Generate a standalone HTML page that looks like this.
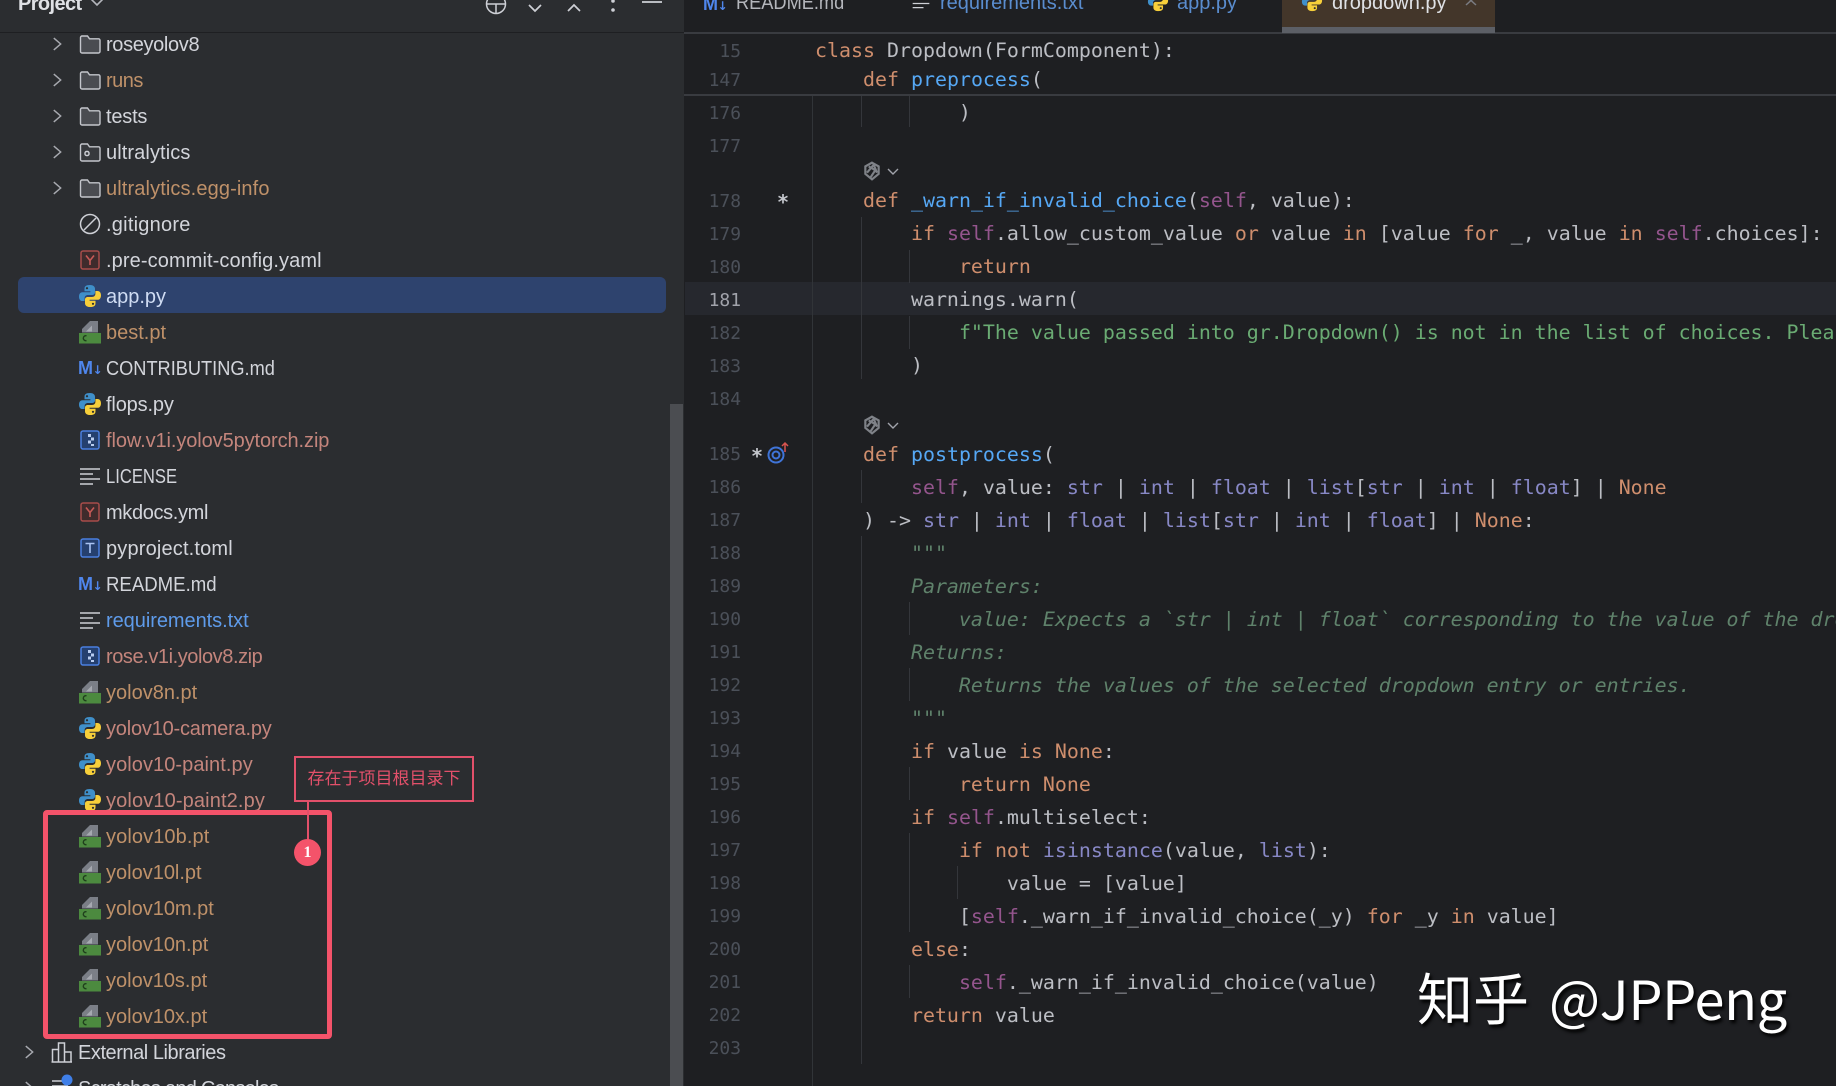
<!DOCTYPE html>
<html><head><meta charset="utf-8"><style>
html,body{margin:0;padding:0;background:#1e1f22}
#p{position:relative;width:1836px;height:1086px;overflow:hidden;background:#1e1f22}
#s{position:absolute;left:0;top:0;width:684px;height:1086px;background:#2b2d30}
.r{position:absolute;left:106px;height:36px;margin-top:2px;font:20px/36px "Liberation Sans",sans-serif;color:#d3d5db;white-space:pre;transform-origin:0 0}
.o{color:#bf9169}.q{color:#c4857c}.b{color:#5e9bea}
svg.i{position:absolute;width:24px;height:24px;overflow:visible}
.m{position:absolute;font:bold 18px/20px "Liberation Sans",sans-serif;color:#4f86ec;letter-spacing:-.5px;white-space:pre}
.m span{font:bold 12px/20px "DejaVu Sans",sans-serif}
.c{position:absolute;left:815px;right:0;height:33px;font:19.93px/33px "DejaVu Sans Mono",monospace;color:#bcbec4;white-space:pre;overflow:hidden}
.n{position:absolute;left:690px;width:51px;margin-top:1px;text-align:right;height:33px;font:17.94px/33px "DejaVu Sans Mono",monospace;color:#4b5059}
.k{color:#cf8e6d}.f{color:#56a8f5}.e{color:#94558d}.u{color:#8888c6}.g{color:#6aab73}.d{color:#5f826b;font-style:italic}
.l{position:absolute;width:1px;background:#34363b}
.t{position:absolute;top:-15px;font:20px/36px "Liberation Sans",sans-serif;white-space:pre;transform-origin:0 0}
</style></head><body><div id="p">
<svg width="0" height="0" style="position:absolute"><defs>
<symbol id="fo" viewBox="0 0 24 24"><path d="M2.500 5.500a1.500 1.500 0 0 1 1.500-1.500h5.500l2 2.800h9a1.500 1.500 0 0 1 1.500 1.500v11.200a1.500 1.500 0 0 1-1.500 1.500H4a1.500 1.500 0 0 1-1.500-1.500z" fill="#4a4c51" stroke="#c4c6cc" stroke-width="1.400"/></symbol>
<symbol id="fu" viewBox="0 0 24 24"><path d="M2.500 5.500a1.500 1.500 0 0 1 1.500-1.500h5.500l2 2.800h9a1.500 1.500 0 0 1 1.500 1.500v11.200a1.500 1.500 0 0 1-1.500 1.500H4a1.500 1.500 0 0 1-1.500-1.500z" fill="#37393d" stroke="#c4c6cc" stroke-width="1.400"/><rect x="7" y="11.500" width="4" height="4" rx="1.500" fill="none" stroke="#ced0d6" stroke-width="1.400"/></symbol>
<symbol id="py" viewBox="0 0 24 24"><path d="M12 1C7.500 1 6.500 2.600 6.500 4.800V7.200H12.400V8.200H4.400C2.200 8.200 1 10 1 12.600S2.200 17 4.400 17H6.600V14.200C6.600 12.200 8 11 10 11H14.400C16 11 17 9.800 17 8.300V4.800C17 2.600 15.200 1 12 1Z" fill="#3f8fc9"/><circle cx="9" cy="4.200" r="1.100" fill="#2b2d30"/><path d="M12 23C16.500 23 17.500 21.400 17.500 19.200V16.800H11.600V15.800H19.600C21.800 15.800 23 14 23 11.400S21.800 7 19.600 7H17.400V9.800C17.400 11.800 16 13 14 13H9.600C8 13 7 14.200 7 15.700V19.200C7 21.400 8.800 23 12 23Z" fill="#f7cf3a"/><circle cx="15" cy="19.800" r="1.100" fill="#2b2d30"/></symbol>
<symbol id="pt" viewBox="0 0 24 24"><path d="M4 12.500V9L12 1H20V12.500Z" fill="#7b7f87"/><path d="M8 11.500 14 5.500V11.500Z" fill="#a6a9b0"/><rect x="1" y="13" width="22" height="10.500" fill="#4c8a3f"/><path d="M8.500 15.800a2.500 2.500 0 1 0 0 4.800" fill="none" stroke="#1f3f1c" stroke-width="1.400"/></symbol>
<symbol id="gi" viewBox="0 0 24 24"><circle cx="12" cy="12" r="9.500" fill="none" stroke="#ced0d6" stroke-width="1.500"/><path d="M6 18 18 6" stroke="#ced0d6" stroke-width="1.500"/></symbol>
<symbol id="y" viewBox="0 0 24 24"><rect x="3" y="3" width="18" height="18" rx="2" fill="#3f2b2c" stroke="#a84c4a" stroke-width="1.500"/><path d="M8 7.500 12 12.500 16 7.500M12 12.500V17" fill="none" stroke="#c75a57" stroke-width="1.600"/></symbol>
<symbol id="z" viewBox="0 0 24 24"><rect x="3" y="3" width="18" height="18" rx="2" fill="#25406f" stroke="#4a7fe0" stroke-width="1.500"/><path d="M10 6h3v3h-3zM13 9.500h3v3h-3zM10 12.500h3v3h-3zM13 16h3v2h-3z" fill="#b9cdf0"/></symbol>
<symbol id="tm" viewBox="0 0 24 24"><rect x="3" y="3" width="18" height="18" rx="2" fill="#25406f" stroke="#4a7fe0" stroke-width="1.500"/><path d="M7.500 7.500h9M12 7.500V17" fill="none" stroke="#a9c3f3" stroke-width="1.600"/></symbol>
<symbol id="tx" viewBox="0 0 24 24"><path d="M2 5h20M2 10h13M2 15h20M2 20h13" stroke="#ced0d6" stroke-width="1.500"/></symbol>
<symbol id="ch" viewBox="0 0 24 24"><path d="M8.500 5.500 16 12 8.500 18.500" fill="none" stroke="#a8aab0" stroke-width="1.600"/></symbol>
<symbol id="ai" viewBox="0 0 24 24"><path d="M12 2 20 6.500V15.500L12 22 4 15.500V6.500Z M8 6.500 16 11 10 20 M6 14 14 4.500 18 14" fill="none" stroke="#7f8288" stroke-width="2.600"/></symbol>
</defs></svg>

<div id="s"></div>
<div style="position:absolute;left:0;top:32px;width:684px;height:1px;background:#1e1f22"></div>
<div class="r" style="left:18px;top:-16px;font-weight:bold;color:#dfe1e5;letter-spacing:-.6px">Project</div>
<svg style="position:absolute;left:89px;top:-4px;overflow:visible" width="16" height="12"><path d="M2 3 8 9 14 3" fill="none" stroke="#b4b6bc" stroke-width="1.600"/></svg>
<svg style="position:absolute;left:480px;top:-8px" width="190" height="32"><circle cx="16" cy="12" r="9.500" fill="none" stroke="#ced0d6" stroke-width="1.500"/><path d="M6 12H26M16 12V22" stroke="#ced0d6" stroke-width="1.500"/><path d="M49 13 55 19 61 13M88 19 94 13 100 19" fill="none" stroke="#ced0d6" stroke-width="1.700"/><circle cx="133" cy="9" r="1.800" fill="#ced0d6"/><circle cx="133" cy="18" r="1.800" fill="#ced0d6"/><path d="M162 10H182" stroke="#ced0d6" stroke-width="1.700"/></svg>

<div style="position:absolute;left:670px;top:404px;width:13px;height:682px;background:#4b4d51"></div>
<div style="position:absolute;left:18px;top:277px;width:648px;height:36px;background:#2e436e;border-radius:6px"></div>

<svg class="i" style="left:46px;top:33px;width:22px;height:22px"><use href="#ch"/></svg>
<svg class="i" style="left:46px;top:69px;width:22px;height:22px"><use href="#ch"/></svg>
<svg class="i" style="left:46px;top:105px;width:22px;height:22px"><use href="#ch"/></svg>
<svg class="i" style="left:46px;top:141px;width:22px;height:22px"><use href="#ch"/></svg>
<svg class="i" style="left:46px;top:177px;width:22px;height:22px"><use href="#ch"/></svg>
<svg class="i" style="left:18px;top:1041px;width:22px;height:22px"><use href="#ch"/></svg>
<svg class="i" style="left:18px;top:1077px;width:22px;height:22px"><use href="#ch"/></svg>

<svg class="i" style="left:78px;top:32px"><use href="#fo"/></svg><div class="r" style="top:25px;letter-spacing:-.35px">roseyolov8</div>
<svg class="i" style="left:78px;top:68px"><use href="#fo"/></svg><div class="r o" style="top:61px;letter-spacing:-.5px">runs</div>
<svg class="i" style="left:78px;top:104px"><use href="#fo"/></svg><div class="r" style="top:97px;letter-spacing:-.2px">tests</div>
<svg class="i" style="left:78px;top:140px"><use href="#fu"/></svg><div class="r" style="top:133px;letter-spacing:.1px">ultralytics</div>
<svg class="i" style="left:78px;top:176px"><use href="#fo"/></svg><div class="r o" style="top:169px;letter-spacing:.12px">ultralytics.egg-info</div>
<svg class="i" style="left:78px;top:212px"><use href="#gi"/></svg><div class="r" style="top:205px;letter-spacing:.23px">.gitignore</div>
<svg class="i" style="left:78px;top:248px"><use href="#y"/></svg><div class="r" style="top:241px;letter-spacing:.1px">.pre-commit-config.yaml</div>
<svg class="i" style="left:78px;top:284px"><use href="#py"/></svg><div class="r" style="top:277px;color:#cfdcf3">app.py</div>
<svg class="i" style="left:78px;top:320px"><use href="#pt"/></svg><div class="r o" style="top:313px">best.pt</div>
<div class="m" style="left:78px;top:358px">M<span>↓</span></div><div class="r" style="top:349px;transform:scaleX(.91)">CONTRIBUTING.md</div>
<svg class="i" style="left:78px;top:392px"><use href="#py"/></svg><div class="r" style="top:385px;letter-spacing:-.15px">flops.py</div>
<svg class="i" style="left:78px;top:428px"><use href="#z"/></svg><div class="r q" style="top:421px;letter-spacing:-.09px">flow.v1i.yolov5pytorch.zip</div>
<svg class="i" style="left:78px;top:464px"><use href="#tx"/></svg><div class="r" style="top:457px;transform:scaleX(.83)">LICENSE</div>
<svg class="i" style="left:78px;top:500px"><use href="#y"/></svg><div class="r" style="top:493px;letter-spacing:-.35px">mkdocs.yml</div>
<svg class="i" style="left:78px;top:536px"><use href="#tm"/></svg><div class="r" style="top:529px;letter-spacing:.17px">pyproject.toml</div>
<div class="m" style="left:78px;top:574px">M<span>↓</span></div><div class="r" style="top:565px;transform:scaleX(.93)">README.md</div>
<svg class="i" style="left:78px;top:608px"><use href="#tx"/></svg><div class="r b" style="top:601px;letter-spacing:-.05px">requirements.txt</div>
<svg class="i" style="left:78px;top:644px"><use href="#z"/></svg><div class="r q" style="top:637px;letter-spacing:-.43px">rose.v1i.yolov8.zip</div>
<svg class="i" style="left:78px;top:680px"><use href="#pt"/></svg><div class="r o" style="top:673px">yolov8n.pt</div>
<svg class="i" style="left:78px;top:716px"><use href="#py"/></svg><div class="r q" style="top:709px;letter-spacing:-.2px">yolov10-camera.py</div>
<svg class="i" style="left:78px;top:752px"><use href="#py"/></svg><div class="r q" style="top:745px;letter-spacing:.07px">yolov10-paint.py</div>
<svg class="i" style="left:78px;top:788px"><use href="#py"/></svg><div class="r q" style="top:781px;letter-spacing:.13px">yolov10-paint2.py</div>
<svg class="i" style="left:78px;top:824px"><use href="#pt"/></svg><div class="r o" style="top:817px;letter-spacing:.1px">yolov10b.pt</div>
<svg class="i" style="left:78px;top:860px"><use href="#pt"/></svg><div class="r o" style="top:853px">yolov10l.pt</div>
<svg class="i" style="left:78px;top:896px"><use href="#pt"/></svg><div class="r o" style="top:889px">yolov10m.pt</div>
<svg class="i" style="left:78px;top:932px"><use href="#pt"/></svg><div class="r o" style="top:925px">yolov10n.pt</div>
<svg class="i" style="left:78px;top:968px"><use href="#pt"/></svg><div class="r o" style="top:961px">yolov10s.pt</div>
<svg class="i" style="left:78px;top:1004px"><use href="#pt"/></svg><div class="r o" style="top:997px">yolov10x.pt</div>
<svg style="position:absolute;left:50px;top:1040px" width="24" height="24"><path d="M2.500 22V9.500H8.500V22M8.500 22V3H14.500V22M14.500 22V12H21V22M1.500 22H22" fill="none" stroke="#ced0d6" stroke-width="1.500"/></svg>
<div class="r" style="left:78px;top:1033px;letter-spacing:-.45px">External Libraries</div>
<svg style="position:absolute;left:50px;top:1074px" width="28" height="16"><path d="M2 7H15M2 12H18" stroke="#ced0d6" stroke-width="1.500"/><circle cx="17" cy="6" r="5.500" fill="#3f7fe8"/></svg>
<div class="r" style="left:78px;top:1069px;letter-spacing:-.75px">Scratches and Consoles</div>

<!-- tabs -->
<div style="position:absolute;left:684px;top:32px;right:0;height:2px;background:#393b40"></div>
<div style="position:absolute;left:1282px;top:0;width:213px;height:27px;background:#43362a"></div>
<div style="position:absolute;left:1282px;top:27px;width:213px;height:6px;background:#5c5f66"></div>
<div class="m" style="left:703px;top:-6px">M<span>↓</span></div><div class="t" style="left:736px;color:#b4b6bc;transform:scaleX(.91)">README.md</div>
<svg class="i" style="left:911px;top:-9px;width:20px;height:20px"><use href="#tx"/></svg><div class="t" style="left:940px;color:#5a8dcf">requirements.txt</div>
<svg class="i" style="left:1147px;top:-10px;width:22px;height:22px"><use href="#py"/></svg><div class="t" style="left:1177px;color:#5a8dcf">app.py</div>
<svg class="i" style="left:1301px;top:-10px;width:22px;height:22px"><use href="#py"/></svg><div class="t" style="left:1332px;color:#dfe1e5">dropdown.py</div>
<svg style="position:absolute;left:1465px;top:-4px" width="14" height="12"><path d="M1 0 11 9M11 0 1 9" stroke="#7a7c82" stroke-width="1.500"/></svg>

<!-- editor structure -->
<div style="position:absolute;left:685px;top:282px;right:0;height:33px;background:#26282e"></div>
<div style="position:absolute;left:684px;top:94px;right:0;height:2px;background:#393b40"></div>
<div class="l" style="left:812px;top:96px;height:990px;background:#313438"></div>
<div class="l" style="left:861px;top:96px;height:31px"></div>
<div class="l" style="left:909px;top:96px;height:31px"></div>
<div class="l" style="left:861px;top:217px;height:162px"></div>
<div class="l" style="left:909px;top:250px;height:33px"></div>
<div class="l" style="left:909px;top:316px;height:33px"></div>
<div class="l" style="left:861px;top:470px;height:33px"></div>
<div class="l" style="left:861px;top:536px;height:528px"></div>
<div class="l" style="left:909px;top:602px;height:33px"></div>
<div class="l" style="left:909px;top:668px;height:33px"></div>
<div class="l" style="left:909px;top:767px;height:33px"></div>
<div class="l" style="left:909px;top:833px;height:99px"></div>
<div class="l" style="left:957px;top:866px;height:33px"></div>
<div class="l" style="left:909px;top:965px;height:33px"></div>

<!-- line numbers -->
<div class="n" style="top:34px">15</div><div class="n" style="top:63px">147</div><div class="n" style="top:96px">176</div><div class="n" style="top:129px">177</div>
<div class="n" style="top:184px">178</div><div class="n" style="top:217px">179</div><div class="n" style="top:250px">180</div><div class="n" style="top:283px;color:#a1a3ab">181</div><div class="n" style="top:316px">182</div><div class="n" style="top:349px">183</div><div class="n" style="top:382px">184</div>
<div class="n" style="top:437px">185</div><div class="n" style="top:470px">186</div><div class="n" style="top:503px">187</div><div class="n" style="top:536px">188</div><div class="n" style="top:569px">189</div><div class="n" style="top:602px">190</div><div class="n" style="top:635px">191</div><div class="n" style="top:668px">192</div><div class="n" style="top:701px">193</div><div class="n" style="top:734px">194</div><div class="n" style="top:767px">195</div><div class="n" style="top:800px">196</div><div class="n" style="top:833px">197</div><div class="n" style="top:866px">198</div><div class="n" style="top:899px">199</div><div class="n" style="top:932px">200</div><div class="n" style="top:965px">201</div><div class="n" style="top:998px">202</div><div class="n" style="top:1031px">203</div>

<!-- gutter -->
<div style="position:absolute;left:777px;top:192px;font:bold 20px/20px 'DejaVu Sans Mono',monospace;color:#c4c6cc">*</div>
<div style="position:absolute;left:751px;top:446px;font:bold 20px/20px 'DejaVu Sans Mono',monospace;color:#c4c6cc">*</div>
<svg style="position:absolute;left:767px;top:442px;overflow:visible" width="28" height="24"><circle cx="9" cy="13" r="7.500" fill="none" stroke="#3f74d8" stroke-width="2"/><circle cx="9" cy="13" r="3.500" fill="none" stroke="#3f74d8" stroke-width="2"/><path d="M18 10V1M15 4 18 1 21 4" fill="none" stroke="#d9544f" stroke-width="1.500"/></svg>
<svg class="i" style="left:862px;top:161px;width:20px;height:20px"><use href="#ai"/></svg>
<svg style="position:absolute;left:887px;top:167px" width="12" height="10"><path d="M1 2 6 7 11 2" fill="none" stroke="#a1a3ab" stroke-width="1.400"/></svg>
<svg class="i" style="left:862px;top:415px;width:20px;height:20px"><use href="#ai"/></svg>
<svg style="position:absolute;left:887px;top:421px" width="12" height="10"><path d="M1 2 6 7 11 2" fill="none" stroke="#a1a3ab" stroke-width="1.400"/></svg>

<!-- code -->
<div class="c" style="top:34px"><span class="k">class</span> Dropdown(FormComponent):</div>
<div class="c" style="top:63px">    <span class="k">def</span> <span class="f">preprocess</span>(</div>
<div class="c" style="top:96px">            )</div>
<div class="c" style="top:184px">    <span class="k">def</span> <span class="f">_warn_if_invalid_choice</span>(<span class="e">self</span>, value):</div>
<div class="c" style="top:217px">        <span class="k">if</span> <span class="e">self</span>.allow_custom_value <span class="k">or</span> value <span class="k">in</span> [value <span class="k">for</span> _, value <span class="k">in</span> <span class="e">self</span>.choices]:</div>
<div class="c" style="top:250px">            <span class="k">return</span></div>
<div class="c" style="top:283px">        warnings.warn(</div>
<div class="c" style="top:316px">            <span class="g">f"The value passed into gr.Dropdown() is not in the list of choices. Please update</span></div>
<div class="c" style="top:349px">        )</div>
<div class="c" style="top:438px">    <span class="k">def</span> <span class="f">postprocess</span>(</div>
<div class="c" style="top:471px">        <span class="e">self</span>, value: <span class="u">str</span> | <span class="u">int</span> | <span class="u">float</span> | <span class="u">list</span>[<span class="u">str</span> | <span class="u">int</span> | <span class="u">float</span>] | <span class="k">None</span></div>
<div class="c" style="top:504px">    ) -&gt; <span class="u">str</span> | <span class="u">int</span> | <span class="u">float</span> | <span class="u">list</span>[<span class="u">str</span> | <span class="u">int</span> | <span class="u">float</span>] | <span class="k">None</span>:</div>
<div class="c d" style="top:537px">        """</div>
<div class="c d" style="top:570px">        Parameters:</div>
<div class="c d" style="top:603px">            value: Expects a `str | int | float` corresponding to the value of the dropdown entry</div>
<div class="c d" style="top:636px">        Returns:</div>
<div class="c d" style="top:669px">            Returns the values of the selected dropdown entry or entries.</div>
<div class="c d" style="top:702px">        """</div>
<div class="c" style="top:735px">        <span class="k">if</span> value <span class="k">is</span> <span class="k">None</span>:</div>
<div class="c" style="top:768px">            <span class="k">return</span> <span class="k">None</span></div>
<div class="c" style="top:801px">        <span class="k">if</span> <span class="e">self</span>.multiselect:</div>
<div class="c" style="top:834px">            <span class="k">if</span> <span class="k">not</span> <span class="u">isinstance</span>(value, <span class="u">list</span>):</div>
<div class="c" style="top:867px">                value = [value]</div>
<div class="c" style="top:900px">            [<span class="e">self</span>._warn_if_invalid_choice(_y) <span class="k">for</span> _y <span class="k">in</span> value]</div>
<div class="c" style="top:933px">        <span class="k">else</span>:</div>
<div class="c" style="top:966px">            <span class="e">self</span>._warn_if_invalid_choice(value)</div>
<div class="c" style="top:999px">        <span class="k">return</span> value</div>

<!-- annotations -->
<div style="position:absolute;left:43px;top:810px;width:279px;height:219px;border:5px solid #f4536a;border-radius:4px"></div>
<div style="position:absolute;left:294px;top:756px;width:176px;height:42px;border:2px solid #e2506a;font:17px/42px 'Liberation Sans','Noto Sans CJK SC',sans-serif;color:#e2506a;text-align:center;white-space:nowrap">存在于项目根目录下</div>
<div style="position:absolute;left:307px;top:802px;width:2px;height:40px;background:#e2506a"></div>
<div style="position:absolute;left:294px;top:839px;width:27px;height:27px;border-radius:50%;background:#f4536a;color:#fff;font:bold 16px/27px 'Liberation Serif',serif;text-align:center">1</div>

<!-- watermark -->
<div style="position:absolute;left:1417px;top:957px;font:56px/80px 'Noto Sans CJK SC',sans-serif;color:#fff;text-shadow:2px 3px 3px #000;white-space:pre">知乎</div>
<div style="position:absolute;left:1549px;top:957px;font:54px/80px 'Noto Sans CJK SC',sans-serif;color:#fff;text-shadow:2px 3px 3px #000;white-space:pre;letter-spacing:-.33px">@JPPeng</div>
</div></body></html>
